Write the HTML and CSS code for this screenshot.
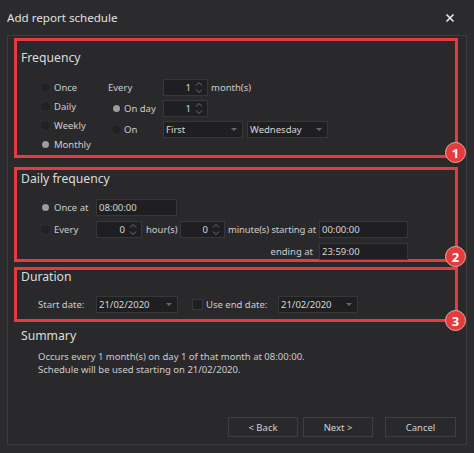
FILE: index.html
```html
<!DOCTYPE html>
<html>
<head>
<meta charset="utf-8">
<link rel="stylesheet" href="styles.css">
</head>
<body>
<div class="win">
  <div class="titlebar">
    <span class="title">Add report schedule</span>
    <svg class="close" width="10" height="10" viewBox="0 0 10 10"><path d="M1.5 1.5 L8.5 8.5 M8.5 1.5 L1.5 8.5" stroke="#e6e6e6" stroke-width="1.7" fill="none"/></svg>
  </div>
  <div class="panel">
    <section class="box box-freq">
      <h2>Frequency</h2>
      <div class="freq-body">
        <div class="radios">
          <label class="radio-row"><span class="radio"></span>Once</label>
          <label class="radio-row"><span class="radio"></span>Daily</label>
          <label class="radio-row"><span class="radio"></span>Weekly</label>
          <label class="radio-row"><span class="radio on"></span>Monthly</label>
        </div>
        <div class="monthly">
          <div class="mrow">
            <span class="mlabel">Every</span>
            <span class="spin w45"><span class="val">1</span><svg class="arr" width="8" height="13" viewBox="0 0 8 13"><path d="M1 4.5 L4 1.5 L7 4.5 M1 8.5 L4 11.5 L7 8.5" stroke="#707074" stroke-width="1" fill="none"/></svg></span>
            <span class="after">month(s)</span>
          </div>
          <div class="mrow">
            <span class="mlabel rl"><span class="radio on"></span>On day</span>
            <span class="spin w45"><span class="val">1</span><svg class="arr" width="8" height="13" viewBox="0 0 8 13"><path d="M1 4.5 L4 1.5 L7 4.5 M1 8.5 L4 11.5 L7 8.5" stroke="#707074" stroke-width="1" fill="none"/></svg></span>
          </div>
          <div class="mrow">
            <span class="mlabel rl"><span class="radio"></span>On</span>
            <span class="combo w80"><span class="val">First</span><span class="tri"></span></span>
            <span class="combo w81 ml4"><span class="val">Wednesday</span><span class="tri"></span></span>
          </div>
        </div>
      </div>
      <span class="badge">1</span>
    </section>

    <section class="box box-daily">
      <h2>Daily frequency</h2>
      <div class="daily-grid">
        <label class="radio-row c1"><span class="radio on"></span>Once at</label>
        <span class="field w81 span24"><span class="val">08:00:00</span></span>

        <label class="radio-row c1"><span class="radio"></span>Every</label>
        <span class="spin w46"><span class="val">0</span><svg class="arr" width="8" height="13" viewBox="0 0 8 13"><path d="M1 4.5 L4 1.5 L7 4.5 M1 8.5 L4 11.5 L7 8.5" stroke="#707074" stroke-width="1" fill="none"/></svg></span>
        <span class="gtext">hour(s)</span>
        <span class="spin w45"><span class="val">0</span><svg class="arr" width="8" height="13" viewBox="0 0 8 13"><path d="M1 4.5 L4 1.5 L7 4.5 M1 8.5 L4 11.5 L7 8.5" stroke="#707074" stroke-width="1" fill="none"/></svg></span>
        <span class="gtext tight">minute(s) starting at</span>
        <span class="field w89"><span class="val">00:00:00</span></span>

        <span class="gtext end c5">ending at</span>
        <span class="field w89"><span class="val">23:59:00</span></span>
      </div>
      <span class="badge">2</span>
    </section>

    <section class="box box-dur">
      <h2>Duration</h2>
      <div class="dur-row">
        <span class="dlabel">Start date:</span>
        <span class="combo w82"><span class="val">21/02/2020</span><span class="tri"></span></span>
        <span class="check"></span>
        <span class="dlabel2">Use end date:</span>
        <span class="combo w80"><span class="val">21/02/2020</span><span class="tri"></span></span>
      </div>
      <span class="badge b3">3</span>
    </section>

    <div class="summary">
      <h2>Summary</h2>
      <p class="sumtext">Occurs every 1 month(s) on day 1 of that month at 08:00:00.<br>Schedule will be used starting on 21/02/2020.</p>
    </div>

    <div class="buttons">
      <span class="btn">&lt; Back</span>
      <span class="btn">Next &gt;</span>
      <span class="btn cancel">Cancel</span>
    </div>
  </div>
</div>
</body>
</html>
```

FILE: styles.css
```css
html, body {
  margin: 0;
  padding: 0;
  background: #2b2b2e;
}

.win {
  width: 474px;
  height: 453px;
  background: #2b2b2e;
  font-family: "Noto Sans", "Open Sans", sans-serif;
  font-size: 9.5px;
  color: #cdcdcd;
  display: flex;
  flex-direction: column;
  box-sizing: border-box;
}

.titlebar {
  height: 35px;
  display: flex;
  align-items: center;
  justify-content: space-between;
  padding: 0 19px 0 7px;
  box-sizing: border-box;
  flex: none;
}

.title {
  font-size: 11.6px;
  color: #e2e2e2;
}

.panel {
  margin: 0 7px;
  height: 410px;
  border: 1px solid #3c3c41;
  background: #29292c;
  box-sizing: border-box;
  padding: 2px 8px 7px 6px;
  display: flex;
  flex-direction: column;
}

.box {
  position: relative;
  border: 3px solid #e33b3f;
  box-sizing: border-box;
  flex: none;
}

.box-freq { height: 120px; }
.box-daily { height: 95px; margin-top: 9px; }
.box-dur { height: 55px; margin-top: 5px; }

h2 {
  margin: 0;
  font-weight: normal;
  font-size: 12.2px;
  line-height: 18px;
  padding-left: 4px;
  color: #dddddd;
}

.box-freq h2 { margin-top: 8px; }
.box-dur h2 { margin-top: -2px; }

/* radios */
.radio {
  width: 11px;
  height: 11px;
  border-radius: 50%;
  background: #222225;
  box-sizing: border-box;
  border: 1px solid #2f2f33;
  display: inline-flex;
  align-items: center;
  justify-content: center;
  flex: none;
}

.radio.on::after {
  content: "";
  width: 7px;
  height: 7px;
  border-radius: 50%;
  background: #9d9da0;
}

.radio-row {
  display: flex;
  align-items: center;
  gap: 3px;
  height: 19px;
}

/* frequency */
.freq-body {
  display: flex;
  margin-top: 11px;
}

.radios {
  margin-left: 23px;
  width: 68px;
  display: flex;
  flex-direction: column;
}

.monthly {
  display: flex;
  flex-direction: column;
  gap: 4px;
  margin-top: 1px;
}

.mrow {
  display: flex;
  align-items: center;
  height: 17px;
}

.mlabel {
  width: 55px;
  display: flex;
  align-items: center;
  flex: none;
}

.mlabel.rl {
  padding-left: 3px;
  gap: 2px;
  box-sizing: border-box;
}

.after { margin-left: 3px; }
.ml4 { margin-left: 4px; }

/* inputs */
.spin, .field, .combo {
  height: 17px;
  box-sizing: border-box;
  background: #1f1f22;
  border: 1px solid #37373b;
  display: flex;
  align-items: center;
  color: #d6d6d6;
  position: relative;
  flex: none;
}

.spin { justify-content: flex-end; padding-right: 16px; }
.spin .arr { position: absolute; right: 4px; top: 1px; }

.field { padding-left: 2px; }

.combo { padding-left: 2px; justify-content: space-between; padding-right: 5px; }

.tri {
  width: 0;
  height: 0;
  border-left: 3px solid transparent;
  border-right: 3px solid transparent;
  border-top: 3px solid #68686c;
}

.w45 { width: 45px; }
.w46 { width: 46px; }
.w80 { width: 80px; }
.w81 { width: 81px; }
.w82 { width: 82px; }
.w89 { width: 89px; }

/* daily */
.daily-grid {
  display: grid;
  grid-template-columns: 56px 46px 38px 45px 94px 89px;
  grid-auto-rows: 17px;
  row-gap: 5px;
  margin-left: 23px;
  margin-top: 11px;
  align-items: center;
}

.daily-grid .radio-row { height: 17px; }
.c1 { grid-column: 1; }
.c5 { grid-column: 5; }
.span24 { grid-column: 2 / 5; }

.gtext { padding-left: 4px; white-space: nowrap; }
.gtext.tight { padding-left: 3px; letter-spacing: -0.12px; }
.gtext.end { justify-self: end; padding-right: 6px; }

/* duration */
.dur-row {
  display: flex;
  align-items: center;
  height: 17px;
  margin-top: 10px;
  margin-left: 21px;
}

.dlabel { width: 58px; flex: none; }

.check {
  width: 11px;
  height: 11px;
  box-sizing: border-box;
  background: #1f1f22;
  border: 1px solid #38383c;
  margin-left: 14px;
  flex: none;
}

.dlabel2 { width: 72px; margin-left: 3px; flex: none; }

/* badges */
.badge {
  position: absolute;
  right: -11px;
  bottom: -8px;
  width: 21px;
  height: 21px;
  border-radius: 50%;
  background: #e53b3d;
  box-sizing: border-box;
  border: 1px solid #f2a4a4;
  color: #ffffff;
  font-size: 13px;
  font-weight: bold;
  display: flex;
  align-items: center;
  justify-content: center;
  font-family: "Noto Sans", sans-serif;
}

.badge.b3 { bottom: -12px; }

/* summary */
.summary { margin-top: 5px; }
.summary h2 { padding-left: 7px; }

.sumtext {
  margin: 5px 0 0 0;
  padding-left: 24px;
  line-height: 13px;
}

/* buttons */
.buttons {
  margin-top: auto;
  display: flex;
  justify-content: flex-end;
  margin-right: 2px;
}

.btn {
  width: 70px;
  height: 20px;
  box-sizing: border-box;
  background: #29292c;
  border: 1px solid #3d3d42;
  display: flex;
  align-items: center;
  justify-content: center;
  color: #d2d2d2;
  margin-left: 5px;
}

.btn.cancel { margin-left: 12px; width: 71px; }
```
